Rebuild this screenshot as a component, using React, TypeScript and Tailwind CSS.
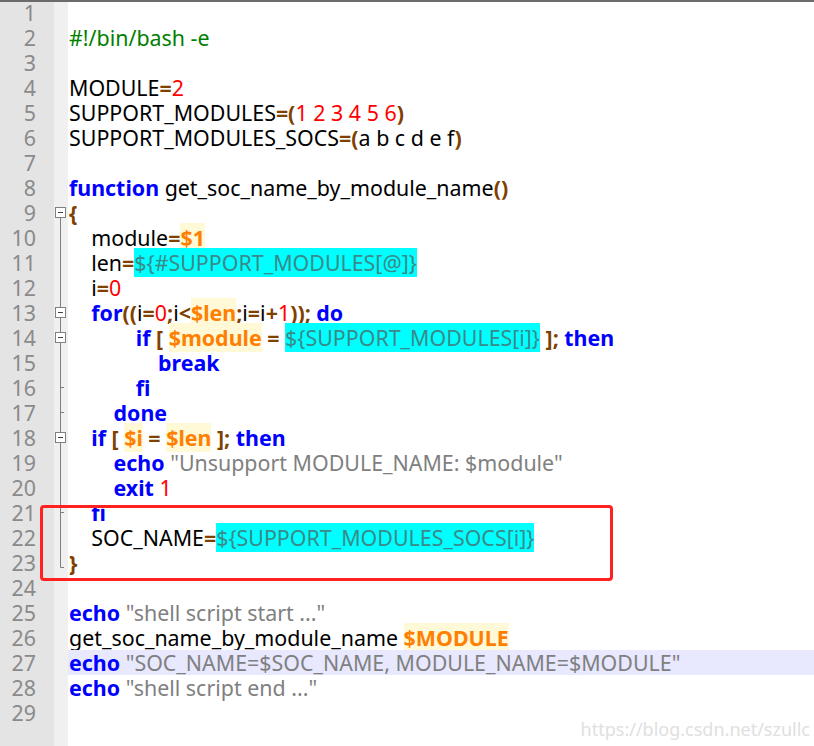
const K = "font-bold text-[#0000ff]";
const O = "font-bold text-[#804000]";
const N = "text-[#ff0000]";
const V = "font-bold text-[#ff8000] bg-[#fff9d8]";
const C = "text-[#3a8a8a] bg-[#00ffff]";
const S = "text-[#808080]";
const G = "text-[#008000]";
const P = "";

type Tok = [string, string];

const lines: Tok[][] = [
  [],
  [["#!/bin/bash -e", G]],
  [],
  [["MODULE", P], ["=", O], ["2", N]],
  [["SUPPORT_MODULES", P], ["=(", O], ["1", N], [" ", P], ["2", N], [" ", P], ["3", N], [" ", P], ["4", N], [" ", P], ["5", N], [" ", P], ["6", N], [")", O]],
  [["SUPPORT_MODULES_SOCS", P], ["=(", O], ["a b c d e f", P], [")", O]],
  [],
  [["function", K], [" get_soc_name_by_module_name", P], ["()", O]],
  [["{", O]],
  [["    module", P], ["=", O], ["$1", V]],
  [["    len", P], ["=", O], ["${#SUPPORT_MODULES[@]}", C]],
  [["    i", P], ["=", O], ["0", N]],
  [["    ", P], ["for", K], ["((", O], ["i", P], ["=", O], ["0", N], [";", O], ["i", P], ["<", O], ["$len", V], [";", O], ["i", P], ["=", O], ["i", P], ["+", O], ["1", N], ["));", O], [" do", K]],
  [["            ", P], ["if", K], [" [ ", O], ["$module", V], [" = ", O], ["${SUPPORT_MODULES[i]}", C], [" ];", O], [" then", K]],
  [["                ", P], ["break", K]],
  [["            ", P], ["fi", K]],
  [["        ", P], ["done", K]],
  [["    ", P], ["if", K], [" [ ", O], ["$i", V], [" = ", O], ["$len", V], [" ];", O], [" then", K]],
  [["        ", P], ["echo", K], [" ", P], ['"Unsupport MODULE_NAME: $module"', S]],
  [["        ", P], ["exit", K], [" ", P], ["1", N]],
  [["    ", P], ["fi", K]],
  [["    SOC_NAME", P], ["=", O], ["${SUPPORT_MODULES_SOCS[i]}", C]],
  [["}", O]],
  [],
  [["echo", K], [" ", P], ['"shell script start ..."', S]],
  [["get_soc_name_by_module_name ", P], ["$MODULE", V]],
  [["echo", K], [" ", P], ['"SOC_NAME=$SOC_NAME, MODULE_NAME=$MODULE"', S]],
  [["echo", K], [" ", P], ['"shell script end ..."', S]],
  [],
];

function Fold({ n }: { n: number }) {
  const box = [9, 13, 14, 18].includes(n);
  const tick = [16, 17, 21].includes(n);
  const line = n >= 10 && n <= 22;
  return (
    <svg width="14" height="25" className="block">
      {line && <line x1="6.5" y1="0" x2="6.5" y2="25" stroke="#808080" />}
      {box && n === 9 && <line x1="6.5" y1="12" x2="6.5" y2="25" stroke="#808080" />}
      {tick && <line x1="6.5" y1="12.5" x2="10" y2="12.5" stroke="#808080" />}
      {n === 23 && <path d="M6.5 0V17.5H10" stroke="#808080" fill="none" />}
      {box && (
        <>
          <rect x="1.5" y="7.5" width="10" height="10" fill="#fff" stroke="#808080" />
          <line x1="4" y1="12.5" x2="9" y2="12.5" stroke="#404040" />
        </>
      )}
    </svg>
  );
}

export default function App() {
  return (
    <div className="relative w-[814px] h-[746px] overflow-hidden bg-white font-['Liberation_Mono'] text-[21.4px]">
      {lines.map((toks, i) => (
        <div key={i} className="flex h-[25px] leading-[25px]">
          <div className="w-[54px] shrink-0 bg-[#e4e4e4] text-[#8a8a8a] text-right pr-[18px]">{i + 1}</div>
          <div className="w-[14px] shrink-0 bg-[#f0f0f0]">
            <Fold n={i + 1} />
          </div>
          <div className={`flex-1 whitespace-pre text-black pl-[1px] ${i === 26 ? "bg-[#e8e8ff]" : ""}`}>
            {toks.map(([t, c], j) => (
              <span key={j} className={c}>{t}</span>
            ))}
          </div>
        </div>
      ))}
      <div className="flex h-full">
        <div className="w-[54px] bg-[#e4e4e4]" />
        <div className="w-[14px] bg-[#f0f0f0]" />
      </div>
      <div className="absolute left-0 top-0 w-full h-[2px] bg-[#6b6b6b]" />
      <div className="absolute left-[40px] top-[505px] w-[573px] h-[76px] border-[3px] border-[#ff2020] rounded-[4px]" />
      <div className="absolute right-[4px] top-[716px] text-[18px] text-[#e0e0e0] font-['Liberation_Sans']">https://blog.csdn.net/szullc</div>
    </div>
  );
}
